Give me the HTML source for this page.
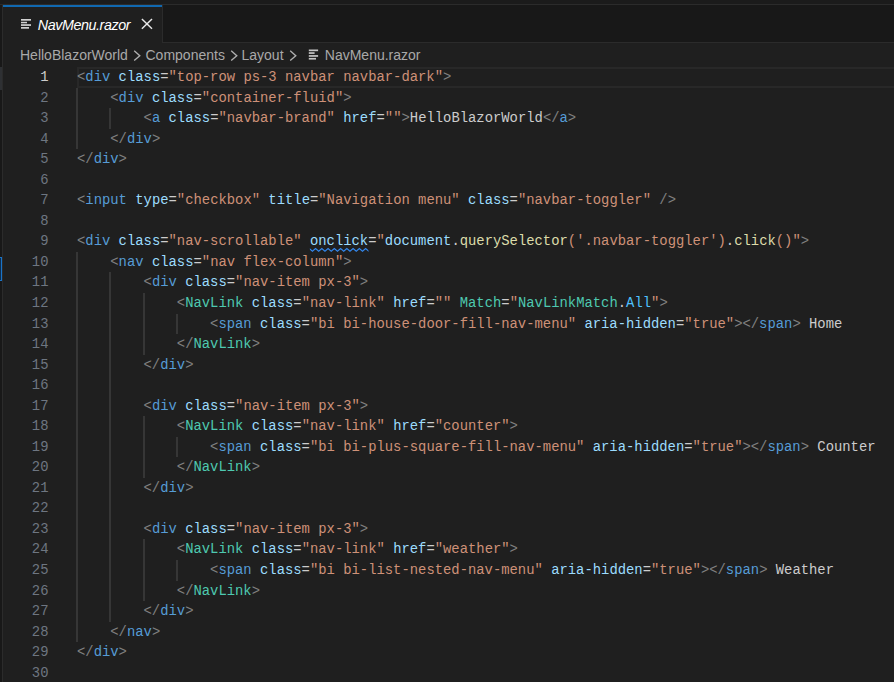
<!DOCTYPE html>
<html><head><meta charset="utf-8"><style>
*{margin:0;padding:0;box-sizing:border-box}
html,body{width:894px;height:682px;overflow:hidden;background:#1f1f1f}
body{position:relative;font-family:"Liberation Sans",sans-serif}
.topstrip{position:absolute;left:0;top:0;width:894px;height:4px;background:#1b1b1b}
.topborder{position:absolute;left:0;top:4px;width:894px;height:1px;background:#2b2b2b}
.tabbar{position:absolute;left:0;top:5px;width:894px;height:37px;background:#181818}
.tabbarborder{position:absolute;left:0;top:42px;width:894px;height:1px;background:#2b2b2b}
.tab{position:absolute;left:3px;top:5px;width:159px;height:38px;background:#1f1f1f;border-top:2px solid #1068b0}
.tabright{position:absolute;left:162px;top:5px;width:1px;height:37px;background:#2b2b2b}
.side{position:absolute;left:0;top:5px;width:2px;height:677px;background:#181818}
.sideborder{position:absolute;left:2px;top:5px;width:1px;height:677px;background:#2b2b2b}
.sidesel{position:absolute;left:-2px;top:257px;width:4px;height:24px;border:1px solid #1a74c8;background:#0c2d50}
.tabtext{position:absolute;left:37.8px;top:16.7px;font-size:14.3px;letter-spacing:-0.42px;font-style:italic;color:#ffffff;line-height:17px;white-space:pre}
.crumb{position:absolute;top:47.4px;font-size:14px;color:#a9a9a9;line-height:16px;white-space:pre}
.ln{position:absolute;left:0;width:48.5px;text-align:right;font-family:"Liberation Mono",monospace;font-size:13.86px;line-height:20.52px;height:20.52px;color:#6e7681}
.ln.act{color:#cccccc}
.cl{position:absolute;left:77.0px;font-family:"Liberation Mono",monospace;font-size:13.86px;line-height:20.52px;height:20.52px;white-space:pre;color:#cccccc}
.g{position:absolute;width:2px;height:20.56px;background:#363636}
.cur{position:absolute;left:77.0px;top:67px;width:830px;height:20.56px;border:2px solid #282828;border-right:none}
.p{color:#808080} .t{color:#569cd6} .a{color:#9cdcfe} .e{color:#cccccc} .s{color:#ce9178}
.c{color:#4ec9b0} .x{color:#cccccc} .f{color:#dcdcaa} .k{color:#4fc1ff}
.q{color:#9cdcfe}
</style></head><body>
<div class="topstrip"></div>
<div class="topborder"></div>
<div class="tabbar"></div>
<div class="tabbarborder"></div>
<div class="tab"></div>
<div class="tabright"></div>
<div class="side"></div>
<div class="sideborder"></div>
<div class="sidesel"></div>
<div style="position:absolute;left:0;top:67px;width:2px;height:23px;background:#2e3033"></div>
<svg style="position:absolute;left:0;top:0" width="894" height="70">
 <g fill="#d0d0d0">
  <rect x="21" y="19" width="10" height="1.7"/>
  <rect x="21" y="21.8" width="6" height="1.5"/>
  <rect x="21" y="24.2" width="10" height="1.7"/>
  <rect x="21" y="27" width="8" height="1.7"/>
 </g>
 <g stroke="#e8e8e8" stroke-width="1.45" stroke-linecap="butt">
  <line x1="141.9" y1="19.0" x2="152.0" y2="28.8"/>
  <line x1="152.0" y1="19.0" x2="141.9" y2="28.8"/>
 </g>
 <g fill="none" stroke="#b0b0b0" stroke-width="1.35">
  <polyline points="134.2,50.8 139.8,55.7 134.2,60.6"/>
  <polyline points="231.2,50.8 236.8,55.7 231.2,60.6"/>
  <polyline points="290.2,50.8 295.8,55.7 290.2,60.6"/>
 </g>
 <g fill="#c4c4c4">
  <rect x="308.8" y="49.5" width="9.3" height="1.7"/>
  <rect x="308.8" y="52.2" width="5.8" height="1.7"/>
  <rect x="308.8" y="55.1" width="9.3" height="1.7"/>
  <rect x="308.8" y="57.9" width="7.2" height="1.7"/>
 </g>
</svg>
<div class="tabtext">NavMenu.razor</div>
<div class="crumb" style="left:20px">HelloBlazorWorld</div>
<div class="crumb" style="left:145.5px">Components</div>
<div class="crumb" style="left:241.5px">Layout</div>
<div class="crumb" style="left:324.8px">NavMenu.razor</div>
<div class="cur"></div>
<svg style="position:absolute;left:0;top:0" width="894" height="682"><defs><clipPath id="sqc"><rect x="309.9" y="240" width="58.6" height="20"/></clipPath></defs><polyline clip-path="url(#sqc)" fill="none" stroke="#3388ee" stroke-width="1.15" points="306.17,251.2 309.30,248.6 312.43,251.2 315.56,248.6 318.69,251.2 321.82,248.6 324.95,251.2 328.08,248.6 331.21,251.2 334.34,248.6 337.47,251.2 340.60,248.6 343.73,251.2 346.86,248.6 349.99,251.2 353.12,248.6 356.25,251.2 359.38,248.6 362.51,251.2 365.64,248.6 368.77,251.2 371.90,248.6"/></svg>
<div class="ln act" style="top:67px">1</div>
<div class="cl" style="top:67px"><span class="p">&lt;</span><span class="t">div</span> <span class="a">class</span><span class="e">=</span><span class="s">&quot;top-row ps-3 navbar navbar-dark&quot;</span><span class="p">&gt;</span></div>
<div class="ln" style="top:88px">2</div>
<div class="g" style="top:87.54px;left:76px"></div>
<div class="cl" style="top:88px">    <span class="p">&lt;</span><span class="t">div</span> <span class="a">class</span><span class="e">=</span><span class="s">&quot;container-fluid&quot;</span><span class="p">&gt;</span></div>
<div class="ln" style="top:108px">3</div>
<div class="g" style="top:108.09px;left:76px"></div>
<div class="g" style="top:108.09px;left:109px"></div>
<div class="cl" style="top:108px">        <span class="p">&lt;</span><span class="t">a</span> <span class="a">class</span><span class="e">=</span><span class="s">&quot;navbar-brand&quot;</span> <span class="a">href</span><span class="e">=</span><span class="s">&quot;&quot;</span><span class="p">&gt;</span><span class="x">HelloBlazorWorld</span><span class="p">&lt;/</span><span class="t">a</span><span class="p">&gt;</span></div>
<div class="ln" style="top:129px">4</div>
<div class="g" style="top:128.63px;left:76px"></div>
<div class="cl" style="top:129px">    <span class="p">&lt;/</span><span class="t">div</span><span class="p">&gt;</span></div>
<div class="ln" style="top:149px">5</div>
<div class="cl" style="top:149px"><span class="p">&lt;/</span><span class="t">div</span><span class="p">&gt;</span></div>
<div class="ln" style="top:170px">6</div>
<div class="cl" style="top:170px"></div>
<div class="ln" style="top:190px">7</div>
<div class="cl" style="top:190px"><span class="p">&lt;</span><span class="t">input</span> <span class="a">type</span><span class="e">=</span><span class="s">&quot;checkbox&quot;</span> <span class="a">title</span><span class="e">=</span><span class="s">&quot;Navigation menu&quot;</span> <span class="a">class</span><span class="e">=</span><span class="s">&quot;navbar-toggler&quot;</span> <span class="p">/&gt;</span></div>
<div class="ln" style="top:211px">8</div>
<div class="cl" style="top:211px"></div>
<div class="ln" style="top:231px">9</div>
<div class="cl" style="top:231px"><span class="p">&lt;</span><span class="t">div</span> <span class="a">class</span><span class="e">=</span><span class="s">&quot;nav-scrollable&quot;</span> <span class="q">onclick</span><span class="e">=</span><span class="s">&quot;</span><span class="a">document</span><span class="e">.</span><span class="f">querySelector</span><span class="s">(&#x27;.navbar-toggler&#x27;)</span><span class="e">.</span><span class="f">click</span><span class="s">()&quot;</span><span class="p">&gt;</span></div>
<div class="ln" style="top:252px">10</div>
<div class="g" style="top:251.88px;left:76px"></div>
<div class="cl" style="top:252px">    <span class="p">&lt;</span><span class="t">nav</span> <span class="a">class</span><span class="e">=</span><span class="s">&quot;nav flex-column&quot;</span><span class="p">&gt;</span></div>
<div class="ln" style="top:272px">11</div>
<div class="g" style="top:272.43px;left:76px"></div>
<div class="g" style="top:272.43px;left:109px"></div>
<div class="cl" style="top:272px">        <span class="p">&lt;</span><span class="t">div</span> <span class="a">class</span><span class="e">=</span><span class="s">&quot;nav-item px-3&quot;</span><span class="p">&gt;</span></div>
<div class="ln" style="top:293px">12</div>
<div class="g" style="top:292.97px;left:76px"></div>
<div class="g" style="top:292.97px;left:109px"></div>
<div class="g" style="top:292.97px;left:143px"></div>
<div class="cl" style="top:293px">            <span class="p">&lt;</span><span class="c">NavLink</span> <span class="a">class</span><span class="e">=</span><span class="s">&quot;nav-link&quot;</span> <span class="a">href</span><span class="e">=</span><span class="s">&quot;&quot;</span> <span class="c">Match</span><span class="e">=</span><span class="s">&quot;</span><span class="c">NavLinkMatch</span><span class="e">.</span><span class="k">All</span><span class="s">&quot;</span><span class="p">&gt;</span></div>
<div class="ln" style="top:314px">13</div>
<div class="g" style="top:313.51px;left:76px"></div>
<div class="g" style="top:313.51px;left:109px"></div>
<div class="g" style="top:313.51px;left:143px"></div>
<div class="g" style="top:313.51px;left:176px"></div>
<div class="cl" style="top:314px">                <span class="p">&lt;</span><span class="t">span</span> <span class="a">class</span><span class="e">=</span><span class="s">&quot;bi bi-house-door-fill-nav-menu&quot;</span> <span class="a">aria-hidden</span><span class="e">=</span><span class="s">&quot;true&quot;</span><span class="p">&gt;&lt;/</span><span class="t">span</span><span class="p">&gt;</span><span class="x"> Home</span></div>
<div class="ln" style="top:334px">14</div>
<div class="g" style="top:334.05px;left:76px"></div>
<div class="g" style="top:334.05px;left:109px"></div>
<div class="g" style="top:334.05px;left:143px"></div>
<div class="cl" style="top:334px">            <span class="p">&lt;/</span><span class="c">NavLink</span><span class="p">&gt;</span></div>
<div class="ln" style="top:355px">15</div>
<div class="g" style="top:354.60px;left:76px"></div>
<div class="g" style="top:354.60px;left:109px"></div>
<div class="cl" style="top:355px">        <span class="p">&lt;/</span><span class="t">div</span><span class="p">&gt;</span></div>
<div class="ln" style="top:375px">16</div>
<div class="g" style="top:375.14px;left:76px"></div>
<div class="g" style="top:375.14px;left:109px"></div>
<div class="cl" style="top:375px"></div>
<div class="ln" style="top:396px">17</div>
<div class="g" style="top:395.68px;left:76px"></div>
<div class="g" style="top:395.68px;left:109px"></div>
<div class="cl" style="top:396px">        <span class="p">&lt;</span><span class="t">div</span> <span class="a">class</span><span class="e">=</span><span class="s">&quot;nav-item px-3&quot;</span><span class="p">&gt;</span></div>
<div class="ln" style="top:416px">18</div>
<div class="g" style="top:416.22px;left:76px"></div>
<div class="g" style="top:416.22px;left:109px"></div>
<div class="g" style="top:416.22px;left:143px"></div>
<div class="cl" style="top:416px">            <span class="p">&lt;</span><span class="c">NavLink</span> <span class="a">class</span><span class="e">=</span><span class="s">&quot;nav-link&quot;</span> <span class="a">href</span><span class="e">=</span><span class="s">&quot;counter&quot;</span><span class="p">&gt;</span></div>
<div class="ln" style="top:437px">19</div>
<div class="g" style="top:436.76px;left:76px"></div>
<div class="g" style="top:436.76px;left:109px"></div>
<div class="g" style="top:436.76px;left:143px"></div>
<div class="g" style="top:436.76px;left:176px"></div>
<div class="cl" style="top:437px">                <span class="p">&lt;</span><span class="t">span</span> <span class="a">class</span><span class="e">=</span><span class="s">&quot;bi bi-plus-square-fill-nav-menu&quot;</span> <span class="a">aria-hidden</span><span class="e">=</span><span class="s">&quot;true&quot;</span><span class="p">&gt;&lt;/</span><span class="t">span</span><span class="p">&gt;</span><span class="x"> Counter</span></div>
<div class="ln" style="top:457px">20</div>
<div class="g" style="top:457.31px;left:76px"></div>
<div class="g" style="top:457.31px;left:109px"></div>
<div class="g" style="top:457.31px;left:143px"></div>
<div class="cl" style="top:457px">            <span class="p">&lt;/</span><span class="c">NavLink</span><span class="p">&gt;</span></div>
<div class="ln" style="top:478px">21</div>
<div class="g" style="top:477.85px;left:76px"></div>
<div class="g" style="top:477.85px;left:109px"></div>
<div class="cl" style="top:478px">        <span class="p">&lt;/</span><span class="t">div</span><span class="p">&gt;</span></div>
<div class="ln" style="top:498px">22</div>
<div class="g" style="top:498.39px;left:76px"></div>
<div class="g" style="top:498.39px;left:109px"></div>
<div class="cl" style="top:498px"></div>
<div class="ln" style="top:519px">23</div>
<div class="g" style="top:518.93px;left:76px"></div>
<div class="g" style="top:518.93px;left:109px"></div>
<div class="cl" style="top:519px">        <span class="p">&lt;</span><span class="t">div</span> <span class="a">class</span><span class="e">=</span><span class="s">&quot;nav-item px-3&quot;</span><span class="p">&gt;</span></div>
<div class="ln" style="top:539px">24</div>
<div class="g" style="top:539.48px;left:76px"></div>
<div class="g" style="top:539.48px;left:109px"></div>
<div class="g" style="top:539.48px;left:143px"></div>
<div class="cl" style="top:539px">            <span class="p">&lt;</span><span class="c">NavLink</span> <span class="a">class</span><span class="e">=</span><span class="s">&quot;nav-link&quot;</span> <span class="a">href</span><span class="e">=</span><span class="s">&quot;weather&quot;</span><span class="p">&gt;</span></div>
<div class="ln" style="top:560px">25</div>
<div class="g" style="top:560.02px;left:76px"></div>
<div class="g" style="top:560.02px;left:109px"></div>
<div class="g" style="top:560.02px;left:143px"></div>
<div class="g" style="top:560.02px;left:176px"></div>
<div class="cl" style="top:560px">                <span class="p">&lt;</span><span class="t">span</span> <span class="a">class</span><span class="e">=</span><span class="s">&quot;bi bi-list-nested-nav-menu&quot;</span> <span class="a">aria-hidden</span><span class="e">=</span><span class="s">&quot;true&quot;</span><span class="p">&gt;&lt;/</span><span class="t">span</span><span class="p">&gt;</span><span class="x"> Weather</span></div>
<div class="ln" style="top:581px">26</div>
<div class="g" style="top:580.56px;left:76px"></div>
<div class="g" style="top:580.56px;left:109px"></div>
<div class="g" style="top:580.56px;left:143px"></div>
<div class="cl" style="top:581px">            <span class="p">&lt;/</span><span class="c">NavLink</span><span class="p">&gt;</span></div>
<div class="ln" style="top:601px">27</div>
<div class="g" style="top:601.11px;left:76px"></div>
<div class="g" style="top:601.11px;left:109px"></div>
<div class="cl" style="top:601px">        <span class="p">&lt;/</span><span class="t">div</span><span class="p">&gt;</span></div>
<div class="ln" style="top:622px">28</div>
<div class="g" style="top:621.65px;left:76px"></div>
<div class="cl" style="top:622px">    <span class="p">&lt;/</span><span class="t">nav</span><span class="p">&gt;</span></div>
<div class="ln" style="top:642px">29</div>
<div class="cl" style="top:642px"><span class="p">&lt;/</span><span class="t">div</span><span class="p">&gt;</span></div>
<div class="ln" style="top:663px">30</div>
<div class="cl" style="top:663px"></div>
</body></html>
